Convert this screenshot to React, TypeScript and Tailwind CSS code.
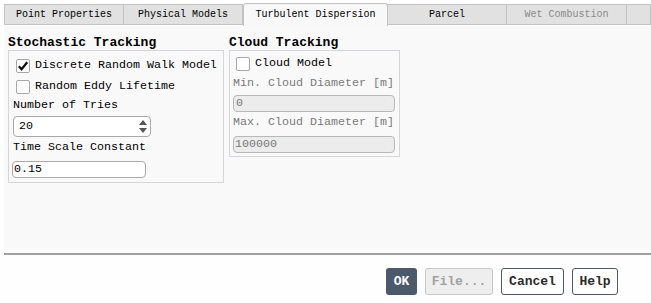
import React from "react";

const tabs = [
  { label: "Point Properties", w: "w-[120px]" },
  { label: "Physical Models", w: "w-[120px]" },
  { label: "Turbulent Dispersion", w: "w-[145px]", active: true },
  { label: "Parcel", w: "w-[120px]" },
  { label: "Wet Combustion", w: "w-[121px]", disabled: true },
  { label: "", w: "flex-1" },
];

const CheckBox = ({ checked }: { checked?: boolean }) => (
  <div className="w-[14px] h-[14px] border border-[#a8a8a8] bg-white rounded-[2px] flex items-center justify-center shrink-0">
    {checked && (
      <svg width="12" height="12" viewBox="0 0 12 12">
        <path d="M1.8 6.2 L4.6 9.2 L10.2 2.2" fill="none" stroke="#111" strokeWidth="2.2" strokeLinejoin="miter" />
      </svg>
    )}
  </div>
);

const App = () => {
  return (
    <div className="w-[651px] h-[303px] bg-[#fefefe] pt-[3px] text-black" style={{ fontFamily: '"Liberation Mono", monospace' }}>
      <div className="ml-[4px] flex flex-col">
        {/* tabs */}
        <div className="flex items-end h-[23px]">
          {tabs.map((t, i) =>
            t.active ? (
              <div
                key={i}
                className={`${t.w} h-[23px] bg-[#f8f8f8] border border-b-0 border-[#c2c2c2] rounded-t-[3px] flex items-center justify-center text-[10px] pb-[1px]`}
              >
                {t.label}
              </div>
            ) : (
              <div
                key={i}
                className={`${t.w} h-[21px] mb-[1px] bg-[#e1e1e1] border border-[#c4c4c4] -ml-px first:ml-0 flex items-center justify-center text-[10px] ${
                  t.disabled ? "text-[#8a8a8a]" : "text-black"
                }`}
              >
                {t.label}
              </div>
            )
          )}
        </div>

        {/* panel */}
        <div className="h-[224px] bg-[#f9f9f9] pl-[4px] pt-[8px] flex gap-[5px] items-start">
          {/* Stochastic Tracking */}
          <div className="w-[216px] flex flex-col">
            <div className="h-[16px] flex items-center text-[13px] font-bold leading-none">Stochastic Tracking</div>
            <div className="border border-[#d3d6dd] pt-[4px] pb-[4px] flex flex-col">
              <div className="h-[21px] flex items-center pl-[7px] gap-[5px] text-[11.67px]">
                <CheckBox checked />
                <span>Discrete Random Walk Model</span>
              </div>
              <div className="h-[21px] flex items-center pl-[7px] gap-[5px] text-[11.67px]">
                <CheckBox />
                <span>Random Eddy Lifetime</span>
              </div>
              <div className="h-[18px] flex items-center pl-[4px] text-[11.67px]">Number of Tries</div>
              <div className="mt-[1px] ml-[4px] w-[138px] h-[21px] bg-white border border-[#a9a9a9] rounded-[4px] flex items-center justify-between pl-[5px] pr-[2px] text-[11.67px]">
                <span>20</span>
                <svg width="10" height="17" viewBox="0 0 10 17">
                  <path d="M1 7 L5 2 L9 7 Z" fill="#555" />
                  <path d="M1 10 L5 15 L9 10 Z" fill="#555" />
                </svg>
              </div>
              <div className="h-[22px] flex items-center pl-[4px] text-[11.67px]">Time Scale Constant</div>
              <div className="mt-[2px] ml-[3px] w-[134px] h-[17px] bg-white border border-[#a9a9a9] rounded-[4px] flex items-center pl-[1px] text-[11.67px]">
                0.15
              </div>
            </div>
          </div>

          {/* Cloud Tracking */}
          <div className="w-[171px] flex flex-col">
            <div className="h-[16px] flex items-center text-[13px] font-bold leading-none">Cloud Tracking</div>
            <div className="border border-[#d3d6dd] pt-[3px] pb-[3px] flex flex-col">
              <div className="h-[20px] flex items-center pl-[6px] gap-[5px] text-[11.67px]">
                <CheckBox />
                <span>Cloud Model</span>
              </div>
              <div className="h-[19px] flex items-center pl-[3px] text-[11.67px] text-[#7a7a7a]">Min. Cloud Diameter [m]</div>
              <div className="mt-[2px] ml-[3px] w-[162px] h-[17px] bg-[#ececec] border border-[#b8b8b8] rounded-[4px] flex items-center pl-[2px] text-[11.67px] text-[#7a7a7a]">
                0
              </div>
              <div className="h-[22px] flex items-center pl-[3px] text-[11.67px] text-[#7a7a7a]">Max. Cloud Diameter [m]</div>
              <div className="mt-[2px] ml-[3px] w-[162px] h-[17px] bg-[#ececec] border border-[#b8b8b8] rounded-[4px] flex items-center pl-[1px] text-[11.67px] text-[#7a7a7a]">
                100000
              </div>
            </div>
          </div>
        </div>

        {/* separator */}
        <div className="mt-[3px] h-[2px] bg-[#a0a0a0]" />

        {/* buttons */}
        <div className="mt-[13px] flex justify-end gap-[8px] pr-[33px] text-[13px] font-bold">
          <button className="w-[31px] h-[27px] rounded-[3px] bg-[#4b5a6b] text-white flex items-center justify-center">OK</button>
          <button className="w-[68px] h-[27px] rounded-[3px] bg-[#eeeeee] border border-[#c8c8c8] text-[#a2a2a2] flex items-center justify-center">
            File...
          </button>
          <button className="w-[63px] h-[27px] rounded-[3px] bg-white border border-[#4b5a6b] text-[#2b2b2b] flex items-center justify-center">
            Cancel
          </button>
          <button className="w-[46px] h-[27px] rounded-[3px] bg-white border border-[#4b5a6b] text-[#2b2b2b] flex items-center justify-center">
            Help
          </button>
        </div>
      </div>
    </div>
  );
};

export default App;
